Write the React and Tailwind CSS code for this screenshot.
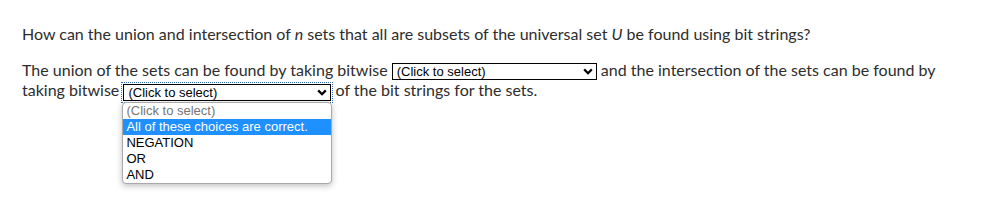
import React from 'react';

const Chevron = () => (
  <svg width="10" height="7" viewBox="0 0 10 7" className="shrink-0">
    <path d="M1.2 1.4 L5 5.2 L8.8 1.4" fill="none" stroke="#000" strokeWidth="2.2" />
  </svg>
);

// Fake <select> control, closed state
const SelectBox = ({ width, focused, children }) => (
  <span className={`relative inline-block align-middle ${focused ? 'outline-1 outline-dotted outline-offset-1 outline-[#2f6db5]' : ''}`}>
    <span
      className="flex h-[17px] items-center justify-between border border-black bg-white pl-[4px] pr-[3px] text-[13px] leading-none text-black"
      style={{ width, fontFamily: '"Liberation Sans", Arial, sans-serif' }}
    >
      <span>(Click to select)</span>
      <Chevron />
    </span>
    {children}
  </span>
);

const options = [
  { label: '(Click to select)', muted: true },
  { label: 'All of these choices are correct.', active: true },
  { label: 'NEGATION' },
  { label: 'OR' },
  { label: 'AND' },
];

export default function App() {
  return (
    <div
      className="min-h-[201px] w-[992px] bg-white px-[22px] pt-[24px] text-[16px] leading-[19px] text-[#2d2d2d]"
      style={{ fontFamily: 'Lato, "Open Sans", sans-serif' }}
    >
      <p>
        How can the union and intersection of <i>n</i> sets that all are subsets of the universal set <i>U</i> be found using bit strings?
      </p>

      <p className="mt-[17px]">
        The union of the sets can be found by taking bitwise{' '}
        <SelectBox width={205} />{' '}
        and the intersection of the sets can be found by taking bitwise{' '}
        <SelectBox width={208} focused>
          {/* open dropdown list */}
          <span
            className="absolute left-[-1px] top-full z-10 mt-[1px] block w-[210px] overflow-hidden rounded-[4px] border border-[#a9a9a9] bg-white py-0 shadow-[0_2px_6px_rgba(0,0,0,0.25)]"
            style={{ fontFamily: '"Liberation Sans", Arial, sans-serif' }}
          >
            {options.map((o) => (
              <span
                key={o.label}
                className={`block h-[16px] pl-[3px] text-[13px] leading-[16px] ${
                  o.active ? 'bg-[#1e90ff] text-white' : o.muted ? 'text-[#757575]' : 'text-black'
                }`}
              >
                {o.label}
              </span>
            ))}
          </span>
        </SelectBox>{' '}
        of the bit strings for the sets.
      </p>
    </div>
  );
}
